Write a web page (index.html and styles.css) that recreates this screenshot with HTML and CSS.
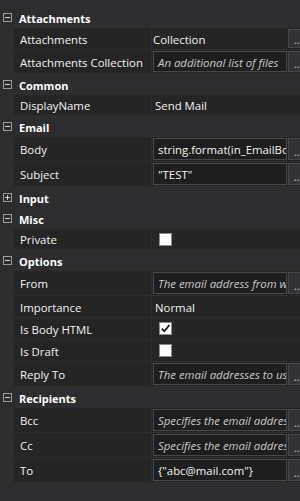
FILE: index.html
```html
<!DOCTYPE html>
<html lang="en">
<head>
    <meta charset="UTF-8">
    <meta name="viewport" content="width=device-width, initial-scale=1.0">
    <title>Properties</title>
    <link rel="stylesheet" href="styles.css">
</head>
<body>
    <div class="grid">
        <div class="cat"><span class="exp"></span>Attachments</div>
        <div class="prop">
            <div class="name">Attachments</div>
            <div class="val"><span class="plain">Collection</span></div>
            <div class="btn"><span>...</span></div>
        </div>
        <div class="prop tall short">
            <div class="name">Attachments Collection</div>
            <div class="val"><div class="box hint">An additional list of files</div></div>
            <div class="btn"><span>...</span></div>
        </div>

        <div class="cat"><span class="exp"></span>Common</div>
        <div class="prop short">
            <div class="name">DisplayName</div>
            <div class="val"><span class="plain pad">Send Mail</span></div>
        </div>

        <div class="cat"><span class="exp"></span>Email</div>
        <div class="prop tall">
            <div class="name">Body</div>
            <div class="val"><div class="box">string.format(in_EmailBody)</div></div>
            <div class="btn"><span>...</span></div>
        </div>
        <div class="prop tall">
            <div class="name">Subject</div>
            <div class="val"><div class="box">"TEST"</div></div>
            <div class="btn"><span>...</span></div>
        </div>

        <div class="cat"><span class="exp plus"></span>Input</div>

        <div class="cat"><span class="exp"></span>Misc</div>
        <div class="prop short">
            <div class="name">Private</div>
            <div class="val"><span class="check"></span></div>
        </div>

        <div class="cat"><span class="exp"></span>Options</div>
        <div class="prop tall">
            <div class="name">From</div>
            <div class="val"><div class="box hint">The email address from which the message is sent</div></div>
            <div class="btn"><span>...</span></div>
        </div>
        <div class="prop">
            <div class="name">Importance</div>
            <div class="val"><span class="plain pad">Normal</span></div>
        </div>
        <div class="prop">
            <div class="name">Is Body HTML</div>
            <div class="val"><span class="check">
                <svg width="11" height="11" viewBox="0 0 11 11"><path d="M1.8 5.6 L4.3 8.2 L9.4 2" fill="none" stroke="#111" stroke-width="1.8"/></svg>
            </span></div>
        </div>
        <div class="prop">
            <div class="name">Is Draft</div>
            <div class="val"><span class="check"></span></div>
        </div>
        <div class="prop tall">
            <div class="name">Reply To</div>
            <div class="val"><div class="box hint">The email addresses to use when replying</div></div>
            <div class="btn"><span>...</span></div>
        </div>

        <div class="cat"><span class="exp"></span>Recipients</div>
        <div class="prop tall">
            <div class="name">Bcc</div>
            <div class="val"><div class="box hint">Specifies the email addresses of hidden recipients</div></div>
            <div class="btn"><span>...</span></div>
        </div>
        <div class="prop tall">
            <div class="name">Cc</div>
            <div class="val"><div class="box hint">Specifies the email addresses of secondary recipients</div></div>
            <div class="btn"><span>...</span></div>
        </div>
        <div class="prop tall">
            <div class="name">To</div>
            <div class="val"><div class="box">{"abc@mail.com"}</div></div>
            <div class="btn"><span>...</span></div>
        </div>
    </div>
</body>
</html>
```

FILE: styles.css
```css
body {
    margin: 0;
    background: #2d2d30;
    font-family: "Open Sans", sans-serif;
    font-size: 11.4px;
    color: #f1f1f1;
    height: 501px;
    overflow: hidden;
}

.grid {
    padding-top: 7px;
}

.cat {
    height: 21px;
    display: flex;
    align-items: center;
    padding-top: 1px;
    box-sizing: border-box;
    font-size: 11px;
    font-weight: bold;
    color: #ffffff;
}

.exp {
    width: 7px;
    height: 7px;
    margin: 0 7px 1px 3px;
    border: 1px solid #9a9a9a;
    background: #2d2d30;
    position: relative;
}

.exp::before {
    content: "";
    position: absolute;
    left: 1px;
    top: 3px;
    width: 5px;
    height: 1px;
    background: #d0d0d0;
}

.exp.plus::after {
    content: "";
    position: absolute;
    left: 3px;
    top: 1px;
    width: 1px;
    height: 5px;
    background: #d0d0d0;
}

.prop {
    margin-left: 14px;
    height: 21px;
    border-bottom: 1px solid #2d2d30;
    display: grid;
    grid-template-columns: 138px 1fr 12px;
    grid-template-rows: minmax(0, 1fr);
    background: #252526;
    overflow: hidden;
}

.prop.short {
    height: 20px;
}

.prop.tall {
    height: 24px;
}

.prop.tall.short {
    height: 23px;
}

.name {
    display: flex;
    align-items: center;
    padding: 1px 0 0 6px;
    border-right: 1px solid #2d2d30;
    white-space: nowrap;
    overflow: hidden;
}

.val {
    display: flex;
    align-items: center;
    padding: 0 1px;
    min-width: 0;
}

.plain {
    white-space: nowrap;
    padding-top: 1px;
}

.plain.pad {
    padding-left: 2px;
}

.box {
    flex: 1;
    align-self: stretch;
    margin: 1px 0;
    box-sizing: border-box;
    border: 1px solid #46464a;
    background: #1e1e1e;
    padding: 1px 4px 0;
    display: flex;
    align-items: center;
    white-space: nowrap;
    overflow: hidden;
    color: #f1f1f1;
}

.box.hint {
    font-style: italic;
    color: #c8c8c8;
}

.btn {
    display: flex;
    padding: 1px 0;
    min-height: 0;
}

.btn span {
    width: 20px;
    flex: none;
    box-sizing: border-box;
    border: 1px solid #46464a;
    background: #333337;
    display: flex;
    align-items: flex-end;
    justify-content: center;
    padding-bottom: 2px;
    line-height: 10px;
    font-size: 10px;
    color: #d0d0d0;
    overflow: hidden;
}

.check {
    width: 13px;
    height: 13px;
    box-sizing: border-box;
    margin-left: 6px;
    border: 1px solid #8a8a8a;
    background: #ffffff;
    display: flex;
    align-items: center;
    justify-content: center;
}
```
